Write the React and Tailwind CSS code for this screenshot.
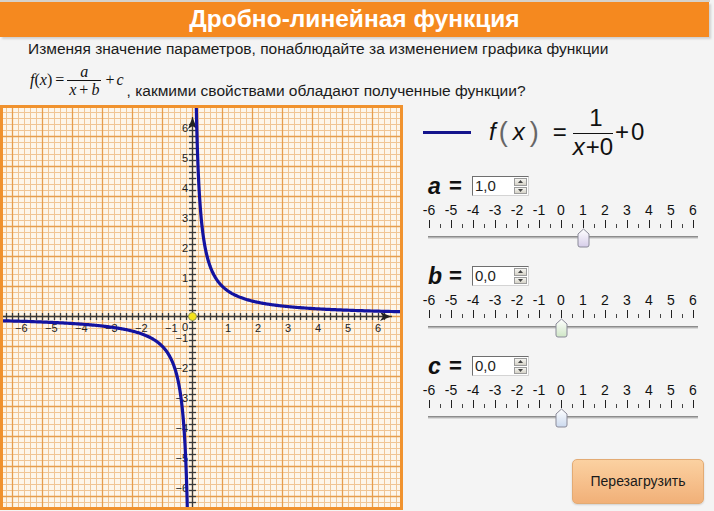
import React from "react";

const OX = 192, OY = 211, U = 30, GW = 403, GH = 405;

function curve(a, b, n = 300) {
  const sign = a < 0 ? -1 : 1;
  const lo = Math.log(Math.abs(a)), hi = Math.log(Math.abs(b));
  let s = "";
  for (let i = 0; i <= n; i++) {
    const t = lo + (hi - lo) * (i / n);
    const x = sign * Math.exp(t);
    const px = OX + U * x, py = OY - U / x;
    s += (i ? "L" : "M") + px.toFixed(2) + "," + py.toFixed(2);
  }
  return s;
}

function Graph() {
  const minorV = [], majorV = [];
  for (let x = 0; x <= GW; x += 6) ((x - OX) % 30 === 0 ? majorV : minorV).push(x);
  const minorH = [], majorH = [];
  for (let y = 1; y <= GH; y += 6) ((y - OY) % 30 === 0 ? majorH : minorH).push(y);
  const xt = [], yt = [];
  for (let x = 0; x <= 384; x += 6) xt.push(x);
  for (let y = 19; y <= GH; y += 6) yt.push(y);
  const ks = [-6, -5, -4, -3, -2, -1, 1, 2, 3, 4, 5, 6];
  const lab = (k) => (k < 0 ? "\u2212" + -k : String(k));
  return (
    <svg width={GW} height={GH} className="block shrink-0">
      <defs>
        <clipPath id="inner">
          <rect x="2" y="2" width={GW - 4} height={GH - 4} />
        </clipPath>
      </defs>
      <rect x="0" y="0" width={GW} height={GH} fill="#fdf6ea" />
      {minorV.map((x) => (
        <line key={"mv" + x} x1={x + 0.5} y1="0" x2={x + 0.5} y2={GH} stroke="#f0c594" strokeWidth="1" />
      ))}
      {minorH.map((y) => (
        <line key={"mh" + y} x1="0" y1={y + 0.5} x2={GW} y2={y + 0.5} stroke="#f0c594" strokeWidth="1" />
      ))}
      {majorV.map((x) => (
        <line key={"Mv" + x} x1={x + 0.5} y1="0" x2={x + 0.5} y2={GH} stroke="#e69e4e" strokeWidth="1.3" />
      ))}
      {majorH.map((y) => (
        <line key={"Mh" + y} x1="0" y1={y + 0.5} x2={GW} y2={y + 0.5} stroke="#e69e4e" strokeWidth="1.3" />
      ))}
      <g stroke="#3a3a3a" strokeWidth="1.3">
        <line x1="0" y1={OY + 0.5} x2="392" y2={OY + 0.5} />
        <line x1={OX + 0.5} y1="12" x2={OX + 0.5} y2={GH} />
        {xt.map((x) => (
          <line key={"xt" + x} x1={x + 0.5} y1={OY - 3} x2={x + 0.5} y2={OY + 4} />
        ))}
        {yt.map((y) => (
          <line key={"yt" + y} x1={OX - 3} y1={y + 0.5} x2={OX + 4} y2={y + 0.5} />
        ))}
      </g>
      <path d={`M380,${OY - 4} L391,${OY + 0.5} L380,${OY + 5} L383,${OY + 0.5} Z`} fill="#222" />
      <path d={`M${OX - 4},24 L${OX + 0.5},12 L${OX + 5},24 L${OX + 0.5},21 Z`} fill="#222" />
      <g fontFamily="'Liberation Sans', Arial, sans-serif" fontSize="11" fill="#222">
        {ks.map((k) => (
          <text key={"xl" + k} x={OX + U * k + 3} y={OY + 16}>{lab(k)}</text>
        ))}
        {ks.map((k) => (
          <text key={"yl" + k} x={OX - 4} y={OY - U * k - 4} textAnchor="end">{lab(k)}</text>
        ))}
        <text x={OX - 4} y={OY + 15} textAnchor="end">0</text>
      </g>
      <g clipPath="url(#inner)" fill="none" stroke="#1313a0" strokeWidth="3.2" strokeLinecap="round">
        <path d={curve(0.135, 7.2)} />
        <path d={curve(-6.6, -0.135)} />
      </g>
      <circle cx={OX + 0.5} cy={OY + 0.5} r="4" fill="#f4e21a" stroke="#9a9a50" strokeWidth="1" />
      <rect x="1.5" y="1.5" width={GW - 3} height={GH - 3} fill="none" stroke="#f0922e" strokeWidth="3" />
    </svg>
  );
}

function Spinner({ value }) {
  return (
    <div className="flex h-[20px] w-[57px] border border-t-[#6f6f6f] border-l-[#6f6f6f] border-b-[#d4d4d4] border-r-[#d4d4d4] bg-white">
      <div className="flex-1 pl-[2px] text-[15px] leading-[18px] text-[#222]">{value}</div>
      <div className="flex w-[15px] flex-col gap-[1px] p-[1px]">
        {[0, 1].map((i) => (
          <div
            key={i}
            className="flex flex-1 items-center justify-center border border-[#9c9c9c] bg-gradient-to-b from-[#f4f4f0] to-[#d6d3c8]"
          >
            <svg width="5" height="3" viewBox="0 0 5 3">
              <path d={i === 0 ? "M0,3 L2.5,0 L5,3 Z" : "M0,0 L2.5,3 L5,0 Z"} fill="#444" />
            </svg>
          </div>
        ))}
      </div>
    </div>
  );
}

function Slider({ name, value, pos, color }) {
  const labels = ["-6", "-5", "-4", "-3", "-2", "-1", "0", "1", "2", "3", "4", "5", "6"];
  const cx = 11 + 22 * (pos + 6);
  return (
    <div className="flex flex-col">
      <div className="flex h-[20px] items-center pl-[25px]">
        <span className="w-[21px] text-[23px] font-bold italic leading-none text-[#111]">{name}</span>
        <span className="w-[23px] text-[22px] font-bold leading-none text-[#111]">=</span>
        <Spinner value={value} />
      </div>
      <div className="mt-[6px] flex h-[16px] pl-[15px]">
        {labels.map((l) => (
          <div key={l} className="w-[22px] text-center text-[14px] leading-[16px] text-[#111]">
            {l}
          </div>
        ))}
      </div>
      <svg width="290" height="30" className="ml-[15px] block">
        <defs>
          <linearGradient id={"th" + name} x1="0" y1="0" x2="0" y2="1">
            <stop offset="0" stopColor="#ffffff" />
            <stop offset="1" stopColor={color} />
          </linearGradient>
        </defs>
        {labels.map((l, i) => (
          <line key={"M" + i} x1={11 + 22 * i + 0.5} y1="2" x2={11 + 22 * i + 0.5} y2="10" stroke="#222" strokeWidth="1" />
        ))}
        {labels.slice(1).map((l, i) => (
          <line key={"m" + i} x1={22 * i + 22 + 0.5} y1="6" x2={22 * i + 22 + 0.5} y2="10" stroke="#444" strokeWidth="1" />
        ))}
        <rect x="10" y="18" width="270" height="3" fill="#b4b4b4" />
        <line x1="10" y1="18.5" x2="280" y2="18.5" stroke="#8c8c8c" />
        <line x1="10" y1="20.5" x2="280" y2="20.5" stroke="#dadada" />
        <path
          d={`M${cx - 5},${16} L${cx + 0.5},${11} L${cx + 6},${16} L${cx + 6},${27} Q${cx + 6},${29} ${cx + 4},${29} L${cx - 3},${29} Q${cx - 5},${29} ${cx - 5},${27} Z`}
          fill={`url(#th${name})`}
          stroke="#8a8a98"
          strokeWidth="1"
        />
      </svg>
    </div>
  );
}

export default function App() {
  return (
    <div className="relative h-[511px] w-[714px] overflow-hidden bg-[#f4f4f4] font-['Liberation_Sans',Arial,sans-serif]">
      <div className="h-[2px] w-[710px] bg-[#d6d2ca]" />
      <div className="flex h-[35px] w-[709px] items-center justify-center bg-[#f5891f] text-[24.5px] font-bold text-white shadow-[2px_2px_2px_rgba(0,0,0,0.15)]">
        Дробно-линейная функция
      </div>
      <div className="mt-[3px] pl-[28px] text-[15.5px] leading-[18px] text-[#1a1a1a]">
        Изменяя значение параметров, понаблюдайте за изменением графика функции
      </div>
      <div className="mt-[4px] flex h-[36px] items-end pl-[30px]">
        <div className="flex h-[36px] items-center font-['Liberation_Serif',serif] text-[16px] italic text-[#111]">
          <span>f</span>
          <span className="not-italic">(</span>
          <span>x</span>
          <span className="not-italic">)</span>
          <span className="not-italic mx-[3px]">=</span>
          <span className="inline-flex flex-col items-center leading-[17px]">
            <span>a</span>
            <span className="border-t border-[#111] px-[2px]">
              x<span className="not-italic mx-[3px]">+</span>b
            </span>
          </span>
          <span className="not-italic ml-[4px]">+</span>
          <span className="ml-[2px]">c</span>
        </div>
        <div className="mb-[-2px] ml-[3px] text-[15.5px] leading-[18px] text-[#1a1a1a]">
          , какмими свойствами обладают полученные функции?
        </div>
      </div>
      <div className="mt-[7px] flex">
        <Graph />
        <div className="flex flex-1 flex-col">
          <div className="flex h-[54px] items-center">
            <div className="ml-[20px] h-[3px] w-[48px] bg-[#14148c]" />
            <span className="ml-[18px] text-[24px] italic leading-none text-[#111]">f</span>
            <span className="ml-[3px] text-[27px] font-light leading-none text-[#666]">(</span>
            <span className="ml-[5px] text-[24px] italic leading-none text-[#111]">x</span>
            <span className="ml-[5px] text-[27px] leading-none text-[#666]">)</span>
            <span className="ml-[14px] text-[24px] leading-none text-[#111]">=</span>
            <span className="ml-[6px] inline-flex flex-col items-center text-[24px] leading-[24px] text-[#111]">
              <span className="mb-[3px] pl-[6px]">1</span>
              <span className="border-t-[1.5px] border-[#111] pt-[1px]">
                <span className="italic">x</span>
                <span className="ml-[1px]">+0</span>
              </span>
            </span>
            <span className="ml-[2px] text-[24px] leading-none tracking-[2px] text-[#111]">+0</span>
          </div>
          <div className="mt-[17px] flex flex-col gap-[18px]">
            <Slider name="a" value="1,0" pos={1} color="#d6cde9" />
            <Slider name="b" value="0,0" pos={0} color="#cfe6c6" />
            <Slider name="c" value="0,0" pos={0} color="#cbd9ee" />
          </div>
          <div className="ml-[169px] mt-[31px] flex h-[45px] w-[132px] items-center justify-center rounded-[5px] border border-[#e3ab74] bg-gradient-to-b from-[#fbd1a1] to-[#f1b078] text-[14px] text-[#1a1a1a] shadow-[0_1px_2px_rgba(0,0,0,0.15)]">
            Перезагрузить
          </div>
        </div>
      </div>
    </div>
  );
}
